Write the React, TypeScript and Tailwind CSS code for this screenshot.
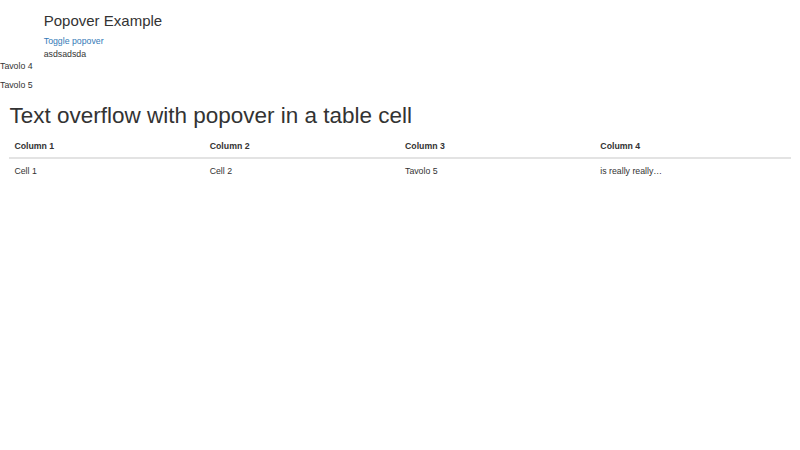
export default function App() {
  return (
    <div className="min-h-[450px] bg-white font-['Liberation_Sans',Arial,sans-serif] text-[8.75px] leading-[1.42857] text-[#333]">
      <div className="mx-auto w-[731.25px] px-[9.375px]">
        <h3 className="mt-[12.5px] mb-[6.25px] text-[15px] leading-[1.1] font-normal">Popover Example</h3>
        <div>
          <a href="#" className="text-[#337ab7] no-underline">
            Toggle popover
          </a>
        </div>
        <div>asdsadsda</div>
      </div>
      <p className="mb-[6.25px]">Tavolo 4</p>
      <p className="mb-[6.25px]">Tavolo 5</p>
      <div className="px-[9.375px]">
        <h1 className="mt-[12.5px] mb-[6.25px] text-[22.5px] leading-[1.1] font-normal">
          Text overflow with popover in a table cell
        </h1>
        <table className="w-full table-fixed border-collapse">
          <thead>
            <tr>
              {["Column 1", "Column 2", "Column 3", "Column 4"].map((c) => (
                <th
                  key={c}
                  className="w-1/4 border-b-2 border-[#e3e3e3] p-[5px] text-left align-bottom font-bold"
                >
                  {c}
                </th>
              ))}
            </tr>
          </thead>
          <tbody>
            <tr>
              <td className="px-[5px] pt-[5.5px] pb-[5px]">Cell 1</td>
              <td className="px-[5px] pt-[5.5px] pb-[5px]">Cell 2</td>
              <td className="px-[5px] pt-[5.5px] pb-[5px]">Tavolo 5</td>
              <td className="px-[5px] pt-[5.5px] pb-[5px] whitespace-nowrap">is really really…</td>
            </tr>
          </tbody>
        </table>
      </div>
    </div>
  );
}
